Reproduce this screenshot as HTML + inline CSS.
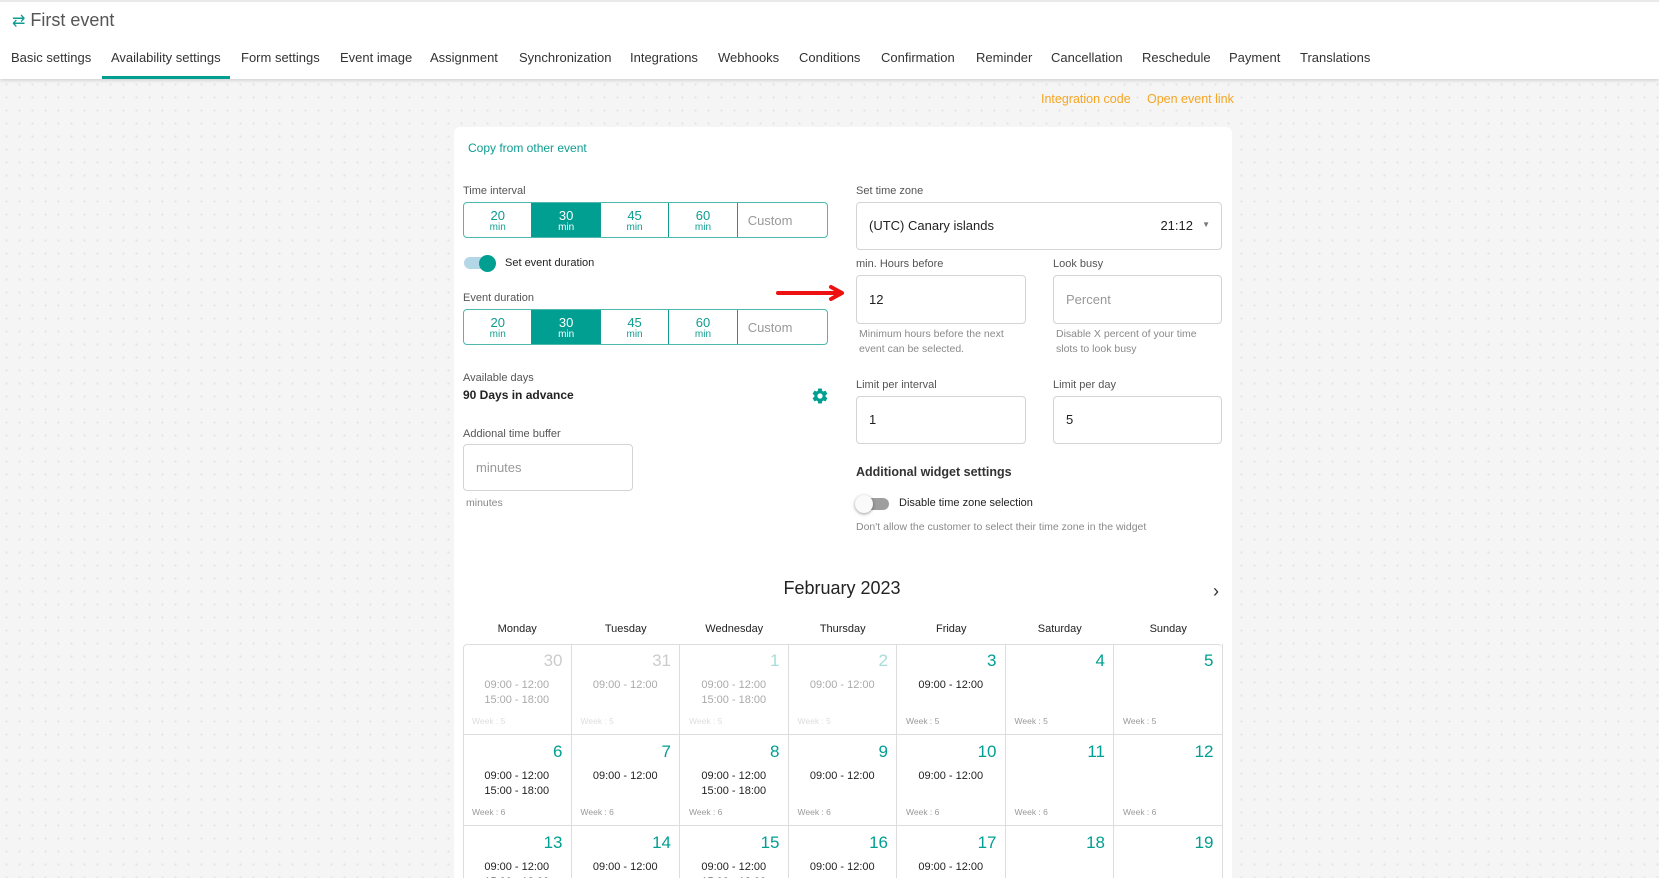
<!DOCTYPE html>
<html style="width:1659px;height:878px;overflow:hidden"><head><meta charset="utf-8"><style>
*{box-sizing:border-box;margin:0;padding:0}
body{width:1659px;height:878px;overflow:hidden;font-family:"Liberation Sans",Arial,sans-serif;background:#f5f5f5;background-image:radial-gradient(#e4e4e4 1px,transparent 1.2px);background-size:13px 13px;position:relative;color:#333}
.a{position:absolute;white-space:nowrap}
#hdr{position:absolute;left:0;top:0;width:1659px;height:79px;background:#fff;box-shadow:0 1px 4px rgba(0,0,0,.18);border-top:2px solid #e9e9e9}
.tab{position:absolute;top:48px;font-size:13px;color:#333}
#card{position:absolute;left:454px;top:127px;width:778px;height:751px;background:#fff;border-radius:6px 6px 0 0}
.lbl{font-size:11px;color:#555}
.seg{position:absolute;left:463px;width:365px;height:36px;border:1px solid #4fb8ae;border-radius:4px;display:flex;overflow:hidden}
.seg div{width:69px;border-right:1px solid #0f9d91;color:#0f9d91;text-align:center;font-size:13px;line-height:13px;padding-top:6px}
.seg div small{display:block;font-size:10px;line-height:11px}
.seg div.on{background:#009f91;color:#fff}
.seg div.c{width:90px;border:none;color:#999;text-align:left;padding-left:10px;padding-top:11px;font-size:13px}
.inp{position:absolute;border:1px solid #d4d4d4;border-radius:4px;background:#fff;font-size:13px;padding-left:12px;color:#222}
.help{font-size:10.5px;color:#8a8a8a;line-height:15px}
.cell{position:absolute;width:108.5px;height:91px;border-right:1px solid #ddd;border-bottom:1px solid #ddd}
.cell.l{height:52px;border-bottom:none;overflow:hidden}
.cell .n{position:absolute;right:8px;top:7px;font-size:17px;color:#009f91}
.cell .t{position:absolute;left:0;width:100%;top:34px;text-align:center;font-size:11px;line-height:15px;color:#222}
.cell .w{position:absolute;left:9px;top:72px;font-size:8.5px;color:#999}
.cell.old .n{color:#ccc}.cell.old .t{color:#aaa}.cell.old .w{color:#ddd}
.cell.old2 .n{color:#a7dcd7}
.dh{position:absolute;top:623px;width:108.5px;text-align:center;font-size:11px;color:#222}
</style></head><body>
<div id="hdr">
<div class="a" style="left:12px;top:8px;font-size:18px;color:#555"><span style="color:#0f9d91;font-size:16px">⇄</span> First event</div>
<div class="tab" style="left:11px">Basic settings</div>
<div class="tab" style="left:111px">Availability settings</div>
<div style="position:absolute;left:102px;top:74px;width:128px;height:3px;background:#009f91"></div>
<div class="tab" style="left:241px">Form settings</div>
<div class="tab" style="left:340px">Event image</div>
<div class="tab" style="left:430px">Assignment</div>
<div class="tab" style="left:519px">Synchronization</div>
<div class="tab" style="left:630px">Integrations</div>
<div class="tab" style="left:718px">Webhooks</div>
<div class="tab" style="left:799px">Conditions</div>
<div class="tab" style="left:881px">Confirmation</div>
<div class="tab" style="left:976px">Reminder</div>
<div class="tab" style="left:1051px">Cancellation</div>
<div class="tab" style="left:1142px">Reschedule</div>
<div class="tab" style="left:1229px">Payment</div>
<div class="tab" style="left:1300px">Translations</div>
</div>
<div class="a" style="left:1041px;top:92px;font-size:12.5px;color:#f5a623">Integration code</div>
<div class="a" style="left:1147px;top:92px;font-size:12.5px;color:#f5a623">Open event link</div>
<div id="card"></div>
<div class="a" style="left:468px;top:141px;font-size:12px;color:#0f9d91">Copy from other event</div>
<div class="a lbl" style="left:463px;top:185px">Time interval</div>
<div class="seg" style="top:202px"><div>20<small>min</small></div><div class="on">30<small>min</small></div><div>45<small>min</small></div><div>60<small>min</small></div><div class="c">Custom</div></div>
<div class="a" style="left:464px;top:257px;width:30px;height:12px;border-radius:6px;background:#b3d7e6"></div>
<div class="a" style="left:479px;top:255px;width:17px;height:17px;border-radius:50%;background:#009f91"></div>
<div class="a" style="left:505px;top:257px;font-size:11px;color:#222">Set event duration</div>
<div class="a lbl" style="left:463px;top:292px">Event duration</div>
<div class="seg" style="top:309px"><div>20<small>min</small></div><div class="on">30<small>min</small></div><div>45<small>min</small></div><div>60<small>min</small></div><div class="c">Custom</div></div>
<div class="a lbl" style="left:463px;top:372px">Available days</div>
<div class="a" style="left:463px;top:388px;font-size:12px;font-weight:bold;color:#222">90 Days in advance</div>
<svg class="a" style="left:811px;top:387px" width="18" height="18" viewBox="0 0 24 24"><path fill="#009f91" d="M19.4 13c.04-.3.06-.6.06-1s-.02-.7-.06-1l2.1-1.6c.2-.15.25-.42.12-.64l-2-3.46c-.12-.22-.4-.3-.6-.22l-2.5 1c-.52-.4-1.080-.72-1.7-.98L14.5 2.4c-.03-.24-.24-.4-.5-.4h-4c-.26 0-.46.16-.5.4l-.38 2.650c-.6.26-1.17.6-1.7.98l-2.5-1c-.22-.08-.48 0-.6.22l-2 3.46c-.13.22-.07.5.12.64L4.57 11c-.04.3-.07.66-.07 1s.03.7.07 1l-2.1 1.65c-.2.15-.25.42-.13.64l2 3.46c.12.22.4.3.6.22l2.5-1c.52.4 1.08.72 1.7.98l.37 2.65c.04.24.25.4.5.4h4c.26 0 .47-.16.5-.4l.38-2.65c.6-.26 1.17-.58 1.7-.98l2.48 1c.23.08.5 0 .6-.22l2-3.46c.13-.22.07-.5-.12-.64zM12 15.5a3.5 3.5 0 1 1 0-7 3.5 3.5 0 0 1 0 7z"/></svg>
<div class="a lbl" style="left:463px;top:428px">Addional time buffer</div>
<div class="inp" style="left:463px;top:444px;width:170px;height:47px;line-height:45px;color:#999">minutes</div>
<div class="a" style="left:466px;top:497px;font-size:10.5px;color:#888">minutes</div>
<div class="a lbl" style="left:856px;top:185px">Set time zone</div>
<div class="inp" style="left:856px;top:202px;width:366px;height:48px;line-height:46px">(UTC) Canary islands<span style="position:absolute;right:28px">21:12</span><span style="position:absolute;right:11px;top:-1px;font-size:8px;color:#777">▼</span></div>
<div class="a lbl" style="left:856px;top:258px">min. Hours before</div>
<div class="a lbl" style="left:1053px;top:258px">Look busy</div>
<div class="inp" style="left:856px;top:275px;width:170px;height:49px;line-height:47px">12</div>
<div class="inp" style="left:1053px;top:275px;width:169px;height:49px;line-height:47px;color:#999">Percent</div>
<div class="a help" style="left:859px;top:327px">Minimum hours before the next<br>event can be selected.</div>
<div class="a help" style="left:1056px;top:327px">Disable X percent of your time<br>slots to look busy</div>
<div class="a lbl" style="left:856px;top:379px">Limit per interval</div>
<div class="a lbl" style="left:1053px;top:379px">Limit per day</div>
<div class="inp" style="left:856px;top:396px;width:170px;height:48px;line-height:46px">1</div>
<div class="inp" style="left:1053px;top:396px;width:169px;height:48px;line-height:46px">5</div>
<div class="a" style="left:856px;top:465px;font-size:12.5px;font-weight:bold;color:#333">Additional widget settings</div>
<div class="a" style="left:859px;top:498px;width:30px;height:12px;border-radius:6px;background:#9e9e9e"></div>
<div class="a" style="left:855px;top:495px;width:18px;height:18px;border-radius:50%;background:#fafafa;box-shadow:0 1px 3px rgba(0,0,0,.4)"></div>
<div class="a" style="left:899px;top:497px;font-size:11px;color:#222">Disable time zone selection</div>
<div class="a" style="left:856px;top:521px;font-size:10.5px;color:#8a8a8a">Don't allow the customer to select their time zone in the widget</div>
<svg class="a" style="left:776px;top:285px" width="70" height="16"><path d="M2 8H60" stroke="#ee1111" stroke-width="4" stroke-linecap="round"/><path d="M55 2L66 8L55 14" fill="none" stroke="#ee1111" stroke-width="4" stroke-linejoin="round" stroke-linecap="round"/></svg>
<div class="a" style="left:742px;top:578px;width:200px;text-align:center;font-size:18px;color:#222">February 2023</div>
<div class="a" style="left:1213px;top:581px;font-size:18px;color:#333">›</div>
<div class="dh" style="left:463px">Monday</div><div class="dh" style="left:571.5px">Tuesday</div><div class="dh" style="left:680px">Wednesday</div><div class="dh" style="left:788.5px">Thursday</div><div class="dh" style="left:897px">Friday</div><div class="dh" style="left:1005.5px">Saturday</div><div class="dh" style="left:1114px">Sunday</div>
<div class="a" style="left:463px;top:644px;width:759px;height:234px;border-left:1px solid #ddd;border-top:1px solid #ddd;border-radius:4px 4px 0 0"></div>
<div class="cell old" style="left:463px;top:644px"><div class="n">30</div><div class="t">09:00 - 12:00<br>15:00 - 18:00</div><div class="w">Week : 5</div></div>
<div class="cell old" style="left:571.5px;top:644px"><div class="n">31</div><div class="t">09:00 - 12:00</div><div class="w">Week : 5</div></div>
<div class="cell old old2" style="left:680px;top:644px"><div class="n">1</div><div class="t">09:00 - 12:00<br>15:00 - 18:00</div><div class="w">Week : 5</div></div>
<div class="cell old old2" style="left:788.5px;top:644px"><div class="n">2</div><div class="t">09:00 - 12:00</div><div class="w">Week : 5</div></div>
<div class="cell" style="left:897px;top:644px"><div class="n">3</div><div class="t">09:00 - 12:00</div><div class="w">Week : 5</div></div>
<div class="cell" style="left:1005.5px;top:644px"><div class="n">4</div><div class="w">Week : 5</div></div>
<div class="cell" style="left:1114px;top:644px"><div class="n">5</div><div class="w">Week : 5</div></div>
<div class="cell" style="left:463px;top:735px"><div class="n">6</div><div class="t">09:00 - 12:00<br>15:00 - 18:00</div><div class="w">Week : 6</div></div>
<div class="cell" style="left:571.5px;top:735px"><div class="n">7</div><div class="t">09:00 - 12:00</div><div class="w">Week : 6</div></div>
<div class="cell" style="left:680px;top:735px"><div class="n">8</div><div class="t">09:00 - 12:00<br>15:00 - 18:00</div><div class="w">Week : 6</div></div>
<div class="cell" style="left:788.5px;top:735px"><div class="n">9</div><div class="t">09:00 - 12:00</div><div class="w">Week : 6</div></div>
<div class="cell" style="left:897px;top:735px"><div class="n">10</div><div class="t">09:00 - 12:00</div><div class="w">Week : 6</div></div>
<div class="cell" style="left:1005.5px;top:735px"><div class="n">11</div><div class="w">Week : 6</div></div>
<div class="cell" style="left:1114px;top:735px"><div class="n">12</div><div class="w">Week : 6</div></div>
<div class="cell l" style="left:463px;top:826px"><div class="n">13</div><div class="t">09:00 - 12:00<br>15:00 - 18:00</div></div>
<div class="cell l" style="left:571.5px;top:826px"><div class="n">14</div><div class="t">09:00 - 12:00</div></div>
<div class="cell l" style="left:680px;top:826px"><div class="n">15</div><div class="t">09:00 - 12:00<br>15:00 - 18:00</div></div>
<div class="cell l" style="left:788.5px;top:826px"><div class="n">16</div><div class="t">09:00 - 12:00</div></div>
<div class="cell l" style="left:897px;top:826px"><div class="n">17</div><div class="t">09:00 - 12:00</div></div>
<div class="cell l" style="left:1005.5px;top:826px"><div class="n">18</div></div>
<div class="cell l" style="left:1114px;top:826px"><div class="n">19</div></div>
</body></html>
